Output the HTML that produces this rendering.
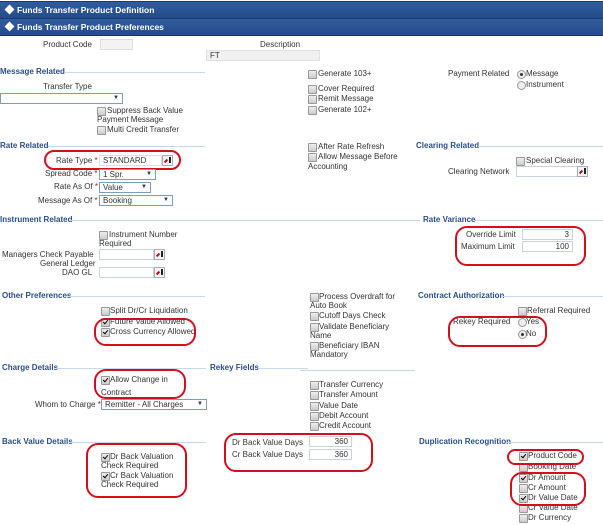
<!DOCTYPE html>
<html><head><meta charset="utf-8"><style>
body{margin:0;width:603px;height:525px;overflow:hidden;background:#fff;font-family:"Liberation Sans",Arial,sans-serif;font-size:8px;color:#333;position:relative}
div,span{position:absolute;white-space:nowrap}
.bar{left:0;width:603px;height:16px;background:linear-gradient(#2f5c9e,#244c8c);border-top:1px solid #1a3a70;border-bottom:1px solid #18356a;color:#fff;font-weight:bold;font-size:8.5px;line-height:16px}
.bar i{position:absolute;left:6px;top:4px;width:7px;height:7px;background:#fff;transform:rotate(45deg)}
.bar b{position:absolute;left:17px}
.sec{font-weight:bold;color:#2a4f85;line-height:10px}
.ln{height:1px;background:#c9d7ea}
.t{line-height:10px}
.cb{width:7px;height:7px;border:1px solid #999;background:linear-gradient(#eee,#ccc);border-radius:1px}
.cb.on::after{content:"";position:absolute;left:2px;top:0px;width:2px;height:4px;border-right:1.5px solid #000;border-bottom:1.5px solid #000;transform:rotate(40deg)}
.rd{width:7px;height:7px;border:1px solid #999;border-radius:50%;background:#eee}
.rd.on::after{content:"";position:absolute;left:2px;top:2px;width:3px;height:3px;border-radius:50%;background:#333}
.in{height:9px;border:1px solid #c8d3e2;background:#fff;line-height:9px;padding:0 3px;box-sizing:content-box}
.sel{height:9px;border:1px solid #7f9db9;background:#fff;line-height:9px;padding-left:3px}
.sel::after{content:"▼";position:absolute;right:3px;top:0;font-size:6px}
.btn{width:9px;height:9px;border:1px solid #aab;background:#f4f4f4}
.btn::after{content:"";position:absolute;left:1px;top:4px;width:4px;height:2px;background:#c00;transform:rotate(-45deg)}
.btn::before{content:"";position:absolute;left:6px;top:1px;width:2px;height:6px;background:#222}
.st{color:#d00}
.el{border:2px solid #d0101e;border-radius:12px;box-sizing:border-box}
</style></head><body>
<div class="bar" style="top:1px"><i></i><b>Funds Transfer Product Definition</b></div>
<div class="bar" style="top:18px"><i></i><b>Funds Transfer Product Preferences</b></div>

<div class="t" style="left:43px;top:40px">Product Code</div>
<div class="in" style="left:100px;top:39px;width:25px;background:#f3f3f3;border-color:#ddd"></div>
<div class="t" style="left:260px;top:40px">Description</div>
<div class="in" style="left:206px;top:50px;width:106px;background:#f0f0f0;border-color:#e0e0e0">FT</div>

<div class="sec" style="left:0;top:67px">Message Related</div><div class="ln" style="left:65px;top:72px;width:140px"></div>
<div class="t" style="left:43px;top:82px">Transfer Type</div>
<div class="sel" style="left:0;top:93px;width:118px"></div>
<div class="cb" style="left:97px;top:107px"></div><div class="t" style="left:107px;top:106px">Suppress Back Value</div>
<div class="t" style="left:97px;top:115px">Payment Message</div>
<div class="cb" style="left:97px;top:126px"></div><div class="t" style="left:107px;top:125px">Multi Credit Transfer</div>

<div class="cb" style="left:308px;top:70px"></div><div class="t" style="left:318px;top:69px">Generate 103+</div>
<div class="cb" style="left:308px;top:85px"></div><div class="t" style="left:318px;top:84px">Cover Required</div>
<div class="cb" style="left:308px;top:95px"></div><div class="t" style="left:318px;top:94px">Remit Message</div>
<div class="cb" style="left:308px;top:106px"></div><div class="t" style="left:318px;top:105px">Generate 102+</div>
<div class="t" style="left:448px;top:69px">Payment Related</div>
<div class="rd on" style="left:517px;top:70px"></div><div class="t" style="left:526px;top:69px">Message</div>
<div class="rd" style="left:517px;top:81px"></div><div class="t" style="left:526px;top:80px">Instrument</div>

<div class="sec" style="left:0;top:141px">Rate Related</div><div class="ln" style="left:48px;top:146px;width:157px"></div>
<div class="t" style="left:56px;top:156px">Rate Type <span class="st" style="position:static">*</span></div>
<div class="in" style="left:99px;top:155px;width:55px;border-color:#ddd">STANDARD</div>
<div class="btn" style="left:162px;top:155px"></div>
<div class="el" style="left:44px;top:150px;width:137px;height:20px"></div>
<div class="t" style="left:45px;top:169px">Spread Code <span class="st" style="position:static">*</span></div>
<div class="sel" style="left:99px;top:169px;width:52px">1 Spr.</div>
<div class="t" style="left:54px;top:182px">Rate As Of <span class="st" style="position:static">*</span></div>
<div class="sel" style="left:99px;top:182px;width:47px">Value</div>
<div class="t" style="left:38px;top:196px">Message As Of <span class="st" style="position:static">*</span></div>
<div class="sel" style="left:99px;top:195px;width:69px">Booking</div>

<div class="cb" style="left:308px;top:143px"></div><div class="t" style="left:318px;top:142px">After Rate Refresh</div>
<div class="cb" style="left:308px;top:153px"></div><div class="t" style="left:318px;top:152px">Allow Message Before</div>
<div class="t" style="left:308px;top:162px">Accounting</div>
<div class="sec" style="left:416px;top:141px">Clearing Related</div><div class="ln" style="left:478px;top:146px;width:125px"></div>
<div class="cb" style="left:516px;top:157px"></div><div class="t" style="left:526px;top:156px">Special Clearing</div>
<div class="t" style="left:448px;top:167px">Clearing Network</div>
<div class="in" style="left:516px;top:166px;width:54px"></div>
<div class="btn" style="left:577px;top:166px"></div>

<div class="sec" style="left:0;top:215px">Instrument Related</div><div class="ln" style="left:70px;top:220px;width:350px"></div>
<div class="sec" style="left:423px;top:215px">Rate Variance</div><div class="ln" style="left:475px;top:220px;width:128px"></div>
<div class="cb" style="left:99px;top:231px"></div><div class="t" style="left:109px;top:230px">Instrument Number</div>
<div class="t" style="left:99px;top:239px">Required</div>
<div class="t" style="left:2px;top:250px">Managers Check Payable</div>
<div class="t" style="left:40px;top:259px">General Ledger</div>
<div class="in" style="left:99px;top:249px;width:47px"></div><div class="btn" style="left:154px;top:249px"></div>
<div class="t" style="left:62px;top:268px">DAO GL</div>
<div class="in" style="left:99px;top:267px;width:47px"></div><div class="btn" style="left:154px;top:267px"></div>

<div class="t" style="left:466px;top:230px">Override Limit</div>
<div class="in" style="left:522px;top:229px;width:43px;text-align:right">3</div>
<div class="t" style="left:461px;top:242px">Maximum Limit</div>
<div class="in" style="left:522px;top:241px;width:43px;text-align:right">100</div>
<div class="el" style="left:455px;top:226px;width:131px;height:40px"></div>

<div class="sec" style="left:2px;top:291px">Other Preferences</div><div class="ln" style="left:70px;top:296px;width:135px"></div>
<div class="cb" style="left:101px;top:307px"></div><div class="t" style="left:110px;top:306px">Split Dr/Cr Liquidation</div>
<div class="cb on" style="left:101px;top:318px"></div><div class="t" style="left:110px;top:317px">Future Value Allowed</div>
<div class="cb on" style="left:101px;top:328px"></div><div class="t" style="left:110px;top:327px">Cross Currency Allowed</div>
<div class="el" style="left:94px;top:318px;width:102px;height:28px"></div>

<div class="cb" style="left:310px;top:293px"></div><div class="t" style="left:319px;top:292px">Process Overdraft for</div>
<div class="t" style="left:310px;top:301px">Auto Book</div>
<div class="cb" style="left:310px;top:312px"></div><div class="t" style="left:319px;top:311px">Cutoff Days Check</div>
<div class="cb" style="left:310px;top:323px"></div><div class="t" style="left:319px;top:322px">Validate Beneficiary</div>
<div class="t" style="left:310px;top:331px">Name</div>
<div class="cb" style="left:310px;top:342px"></div><div class="t" style="left:319px;top:341px">Beneficiary IBAN</div>
<div class="t" style="left:310px;top:350px">Mandatory</div>
<div class="ln" style="left:300px;top:370px;width:115px"></div>

<div class="sec" style="left:418px;top:291px">Contract Authorization</div><div class="ln" style="left:502px;top:296px;width:101px"></div>
<div class="cb" style="left:518px;top:307px"></div><div class="t" style="left:527px;top:306px">Referral Required</div>
<div class="t" style="left:453px;top:317px">Rekey Required</div>
<div class="rd" style="left:518px;top:318px"></div><div class="t" style="left:526px;top:317px">Yes</div>
<div class="rd on" style="left:518px;top:330px"></div><div class="t" style="left:526px;top:329px">No</div>
<div class="el" style="left:448px;top:316px;width:99px;height:31px"></div>

<div class="sec" style="left:2px;top:363px">Charge Details</div><div class="ln" style="left:56px;top:368px;width:150px"></div>
<div class="sec" style="left:210px;top:363px">Rekey Fields</div><div class="ln" style="left:258px;top:368px;width:50px"></div>
<div class="cb on" style="left:101px;top:376px"></div><div class="t" style="left:110px;top:375px">Allow Change in</div>
<div class="t" style="left:101px;top:388px">Contract</div>
<div class="el" style="left:94px;top:369px;width:92px;height:30px"></div>
<div class="t" style="left:35px;top:400px">Whom to Charge <span class="st" style="position:static">*</span></div>
<div class="sel" style="left:101px;top:399px;width:101px">Remitter - All Charges</div>

<div class="cb" style="left:310px;top:381px"></div><div class="t" style="left:319px;top:380px">Transfer Currency</div>
<div class="cb" style="left:310px;top:391px"></div><div class="t" style="left:319px;top:390px">Transfer Amount</div>
<div class="cb" style="left:310px;top:402px"></div><div class="t" style="left:319px;top:401px">Value Date</div>
<div class="cb" style="left:310px;top:412px"></div><div class="t" style="left:319px;top:411px">Debit Account</div>
<div class="cb" style="left:310px;top:422px"></div><div class="t" style="left:319px;top:421px">Credit Account</div>

<div class="sec" style="left:2px;top:437px">Back Value Details</div><div class="ln" style="left:70px;top:442px;width:136px"></div>
<div class="cb on" style="left:101px;top:453px"></div><div class="t" style="left:110px;top:452px">Dr Back Valuation</div>
<div class="t" style="left:101px;top:461px">Check Required</div>
<div class="cb on" style="left:101px;top:472px"></div><div class="t" style="left:110px;top:471px">Cr Back Valuation</div>
<div class="t" style="left:101px;top:480px">Check Required</div>
<div class="el" style="left:86px;top:443px;width:101px;height:55px"></div>

<div class="t" style="left:232px;top:438px">Dr Back Value Days</div>
<div class="in" style="left:309px;top:436px;width:35px;text-align:right">360</div>
<div class="t" style="left:232px;top:450px">Cr Back Value Days</div>
<div class="in" style="left:309px;top:449px;width:35px;text-align:right">360</div>
<div class="el" style="left:224px;top:433px;width:149px;height:39px"></div>

<div class="sec" style="left:419px;top:437px">Duplication Recognition</div><div class="ln" style="left:506px;top:442px;width:97px"></div>
<div class="cb on" style="left:519px;top:452px"></div><div class="t" style="left:528px;top:451px">Product Code</div>
<div class="cb" style="left:519px;top:463px"></div><div class="t" style="left:528px;top:462px">Booking Date</div>
<div class="cb on" style="left:519px;top:474px"></div><div class="t" style="left:528px;top:473px">Dr Amount</div>
<div class="cb" style="left:519px;top:484px"></div><div class="t" style="left:528px;top:483px">Cr Amount</div>
<div class="cb on" style="left:519px;top:494px"></div><div class="t" style="left:528px;top:493px">Dr Value Date</div>
<div class="cb" style="left:519px;top:504px"></div><div class="t" style="left:528px;top:503px">Cr Value Date</div>
<div class="cb" style="left:519px;top:514px"></div><div class="t" style="left:528px;top:513px">Dr Currency</div>
<div class="el" style="left:507px;top:449px;width:77px;height:16px"></div>
<div class="el" style="left:510px;top:472px;width:76px;height:34px"></div>
</body></html>
